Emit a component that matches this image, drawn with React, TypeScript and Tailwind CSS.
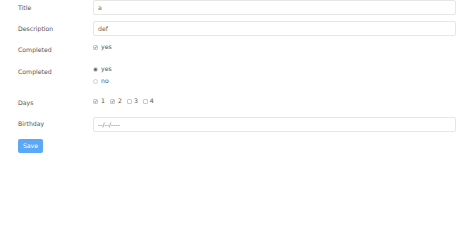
import React from 'react'

const font = { fontFamily: '"DejaVu Sans", sans-serif' }

function Check({ checked }: { checked: boolean }) {
  return (
    <span className="inline-flex h-[5px] w-[5px] items-center justify-center rounded-[1px] border border-[#c8c8c8] bg-white">
      {checked && (
        <svg viewBox="0 0 6 6" className="h-[5px] w-[5px]">
          <path d="M0.8 3.2 L2.4 4.8 L5.2 1" stroke="#444" strokeWidth="1.4" fill="none" />
        </svg>
      )}
    </span>
  )
}

function Radio({ checked }: { checked: boolean }) {
  return (
    <span className="inline-flex h-[5px] w-[5px] items-center justify-center rounded-full border border-[#cfcfcf] bg-white">
      {checked && <span className="h-[3px] w-[3px] rounded-full bg-[#666]" />}
    </span>
  )
}

function Row({ label, children, top, h }: { label: string; children: React.ReactNode; top: string; h: string }) {
  return (
    <div className={`flex ${h}`}>
      <div className={`w-[75px] shrink-0 ${top} text-[6.2px] leading-[10px] text-[#555]`}>{label}</div>
      <div className="flex-1">{children}</div>
    </div>
  )
}

function TextBox({ value }: { value: string }) {
  return (
    <div className="h-[15px] rounded-[2px] border border-[#e6e6e6] bg-white px-[4px] text-[6.2px] leading-[13px] text-[#666]">
      {value}
    </div>
  )
}

export default function App() {
  return (
    <div className="h-[248px] w-[474px] bg-white" style={font}>
      <div className="flex flex-col px-[18px]">
        <Row label="Title" top="pt-[3px]" h="h-[15px]">
          <TextBox value="a" />
        </Row>
        <div className="mt-[6px]">
          <Row label="Description" top="pt-[3px]" h="h-[15px]">
            <TextBox value="def" />
          </Row>
        </div>
        <div className="mt-[6px]">
          <Row label="Completed" top="pt-[3px]" h="h-[10px]">
            <div className="flex h-[10px] items-center gap-[3px] text-[6.2px] leading-[10px] text-[#555]">
              <Check checked /> yes
            </div>
          </Row>
        </div>
        <div className="mt-[12px]">
          <Row label="Completed" top="pt-[3px]" h="h-[22px]">
            <div className="flex flex-col gap-[2px] text-[6.2px] leading-[10px] text-[#555]">
              <div className="flex h-[10px] items-center gap-[3px]"><Radio checked /> yes</div>
              <div className="flex h-[10px] items-center gap-[3px]"><Radio checked={false} /> no</div>
            </div>
          </Row>
        </div>
        <div className="mt-[10px]">
          <Row label="Days" top="pt-[2px]" h="h-[10px]">
            <div className="flex h-[10px] items-center gap-[5px] text-[6.2px] leading-[10px] text-[#555]">
              <span className="flex items-center gap-[3px]"><Check checked /> 1</span>
              <span className="flex items-center gap-[3px]"><Check checked /> 2</span>
              <span className="flex items-center gap-[2px]"><Check checked={false} /> 3</span>
              <span className="flex items-center gap-[2px]"><Check checked={false} /> 4</span>
            </div>
          </Row>
        </div>
        <div className="mt-[11px]">
          <Row label="Birthday" top="pt-[2px]" h="h-[15px]">
            <TextBox value="--/--/----" />
          </Row>
        </div>
        <div className="mt-[7px] flex">
          <button className="h-[14px] w-[25px] rounded-[2px] bg-[#5aa8f7] text-[6.2px] leading-[14px] text-white">Save</button>
        </div>
      </div>
    </div>
  )
}
